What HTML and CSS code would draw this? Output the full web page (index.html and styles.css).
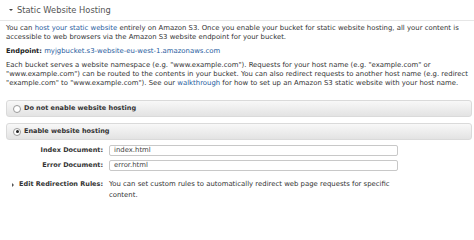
FILE: index.html
```html
<!DOCTYPE html>
<html>
<head>
<meta charset="utf-8">
<link rel="stylesheet" href="styles.css">
</head>
<body>
<div class="panel">
  <div class="hdr"><span class="tri-down"></span><span class="hdr-title">Static Website Hosting</span></div>
  <div class="content">
    <p class="p1">You can <a href="#">host your static website</a> entirely on Amazon S3. Once you enable your bucket for static website hosting, all your content is accessible to web browsers via the Amazon S3 website endpoint for your bucket.</p>
    <p class="p2"><b>Endpoint:</b> <a href="#">myjgbucket.s3-website-eu-west-1.amazonaws.com</a></p>
    <p class="p3">Each bucket serves a website namespace (e.g. "www.example.com"). Requests for your host name (e.g. "example.com" or "www.example.com") can be routed to the contents in your bucket. You can also redirect requests to another host name (e.g. redirect "example.com" to "www.example.com"). See our <a href="#">walkthrough</a> for how to set up an Amazon S3 static website with your host name.</p>
    <div class="bar bar1"><span class="radio"></span><span class="bar-label">Do not enable website hosting</span></div>
    <div class="bar bar2"><span class="radio checked"></span><span class="bar-label">Enable website hosting</span></div>
    <div class="form">
      <div class="lbl">Index Document:</div>
      <div class="inp">index.html</div>
      <div class="lbl">Error Document:</div>
      <div class="inp">error.html</div>
      <div class="lbl lbl-top"><span class="tri-right"></span>Edit Redirection Rules:</div>
      <div class="desc">You can set custom rules to automatically redirect web page requests for specific content.</div>
    </div>
  </div>
</div>
</body>
</html>
```

FILE: styles.css
```css
html, body {
  margin: 0;
  padding: 0;
  background: #fff;
}
body {
  font-family: "DejaVu Sans", Verdana, sans-serif;
  font-size: 6.9px;
  line-height: 9px;
  color: #333;
}
a {
  color: #1f5c9e;
  text-decoration: none;
}
b { font-size: 6.6px; color: #222; }
p { margin: 0; }
.hdr {
  height: 20px;
  border-bottom: 1px solid #e6e6e6;
  display: flex;
  align-items: center;
  padding-left: 9px;
}
.tri-down {
  width: 0;
  height: 0;
  border-left: 2px solid transparent;
  border-right: 2px solid transparent;
  border-top: 2.5px solid #444;
  margin-right: 4px;
}
.hdr-title {
  font-size: 8.3px;
  color: #555;
}
.content {
  padding: 3px 2px 0 6px;
}
.p1 { margin-top: 0; }
.p2 { margin-top: 5px; }
.p3 { margin-top: 5px; }
.bar {
  display: flex;
  align-items: center;
  border: 1px solid #dadada;
  border-radius: 3px;
  background: linear-gradient(#f8f8f8, #e3e3e3);
  padding-left: 6px;
  box-sizing: border-box;
  font-weight: bold;
  font-size: 6.5px;
  color: #333;
}
.bar1 { margin-top: 12px; height: 17px; }
.bar2 { margin-top: 6px; height: 17px; }
.radio {
  width: 6px;
  height: 6px;
  border: 1px solid #999;
  border-radius: 50%;
  background: #fff;
  margin-right: 3px;
  position: relative;
  flex: none;
}
.radio.checked::after {
  content: "";
  position: absolute;
  left: 1.5px;
  top: 1.5px;
  width: 3px;
  height: 3px;
  border-radius: 50%;
  background: #222;
}
.form {
  display: grid;
  grid-template-columns: 97px 289px;
  column-gap: 6px;
  row-gap: 4px;
  margin-top: 5px;
  align-items: center;
}
.lbl {
  text-align: right;
  font-weight: bold;
  font-size: 6.5px;
  color: #333;
}
.lbl-top {
  align-self: start;
  margin-top: 4px;
  line-height: 11px;
  display: flex;
  justify-content: flex-end;
  align-items: center;
}
.tri-right {
  width: 0;
  height: 0;
  border-top: 2px solid transparent;
  border-bottom: 2px solid transparent;
  border-left: 2.5px solid #555;
  margin-right: 5px;
}
.inp {
  height: 11px;
  box-sizing: border-box;
  border: 1px solid #c8c8c8;
  border-radius: 2px;
  background: #fff;
  padding-left: 4px;
  line-height: 9px;
  color: #444;
}
.desc {
  margin-top: 4px;
  line-height: 11px;
}
```
